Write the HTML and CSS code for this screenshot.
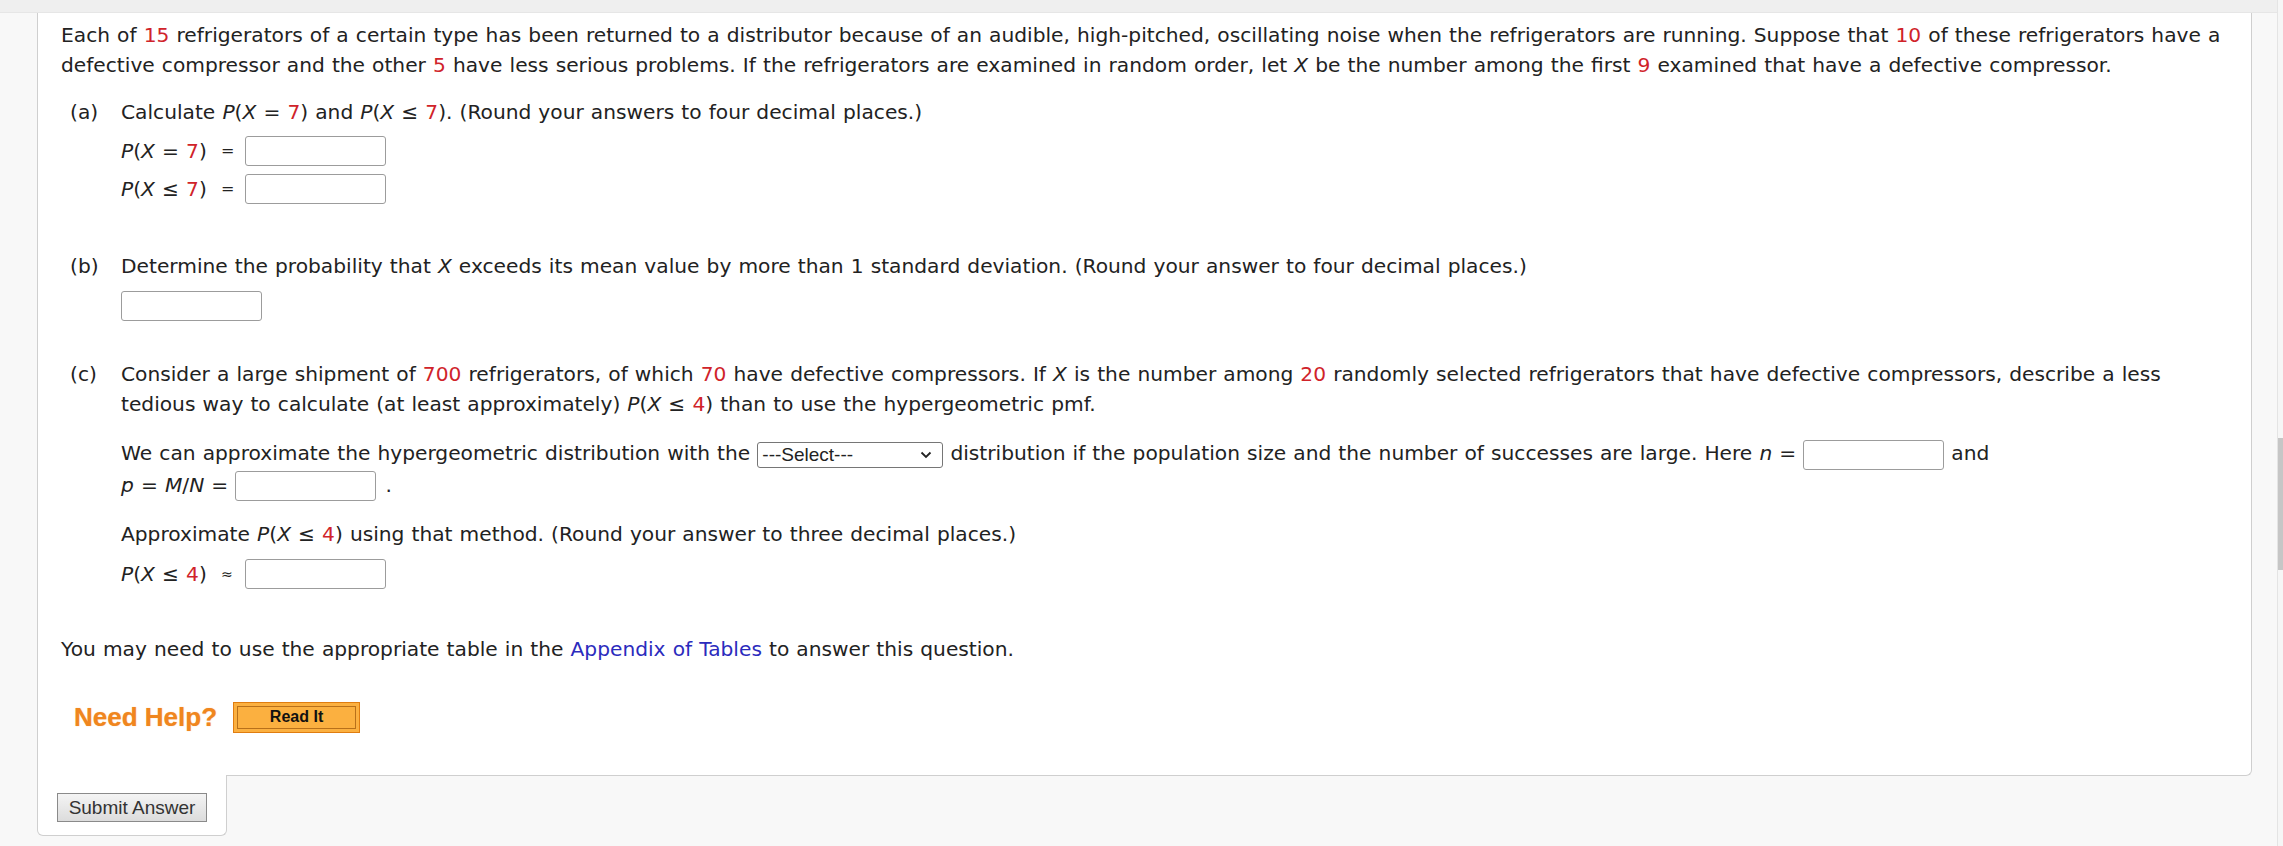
FILE: index.html
```html
<!DOCTYPE html>
<html lang="en">
<head>
<meta charset="utf-8">
<title>Question</title>
<link rel="stylesheet" href="styles.css">
</head>
<body>
<div class="page">
  <div class="main">
    <div class="topstrip"></div>
    <div class="wrap">
      <div class="panel">
        <p class="intro">Each of <span class="red">15</span> refrigerators of a certain type has been returned to a distributor because of an audible, high-pitched, oscillating noise when the refrigerators are running. Suppose that <span class="red">10</span> of these refrigerators have a defective compressor and the other <span class="red">5</span> have less serious problems. If the refrigerators are examined in random order, let <i>X</i> be the number among the first <span class="red">9</span> examined that have a defective compressor.</p>

        <div class="part part-a">
          <div class="label">(a)</div>
          <div class="body">
            <div class="qline">Calculate <i>P</i>(<i>X</i> = <span class="red">7</span>) and <i>P</i>(<i>X</i> &le; <span class="red">7</span>). (Round your answers to four decimal places.)</div>
            <div class="ansrow first"><span class="expr"><i>P</i>(<i>X</i> = <span class="red">7</span>)</span><span class="eq">=</span><span class="box"></span></div>
            <div class="ansrow"><span class="expr"><i>P</i>(<i>X</i> &le; <span class="red">7</span>)</span><span class="eq">=</span><span class="box"></span></div>
          </div>
        </div>

        <div class="part part-b">
          <div class="label">(b)</div>
          <div class="body">
            <div class="qline">Determine the probability that <i>X</i> exceeds its mean value by more than 1 standard deviation. (Round your answer to four decimal places.)</div>
            <div class="boxline"><span class="box"></span></div>
          </div>
        </div>

        <div class="part part-c">
          <div class="label">(c)</div>
          <div class="body">
            <div class="qline">Consider a large shipment of <span class="red">700</span> refrigerators, of which <span class="red">70</span> have defective compressors. If <i>X</i> is the number among <span class="red">20</span> randomly selected refrigerators that have defective compressors, describe a less tedious way to calculate (at least approximately) <i>P</i>(<i>X</i> &le; <span class="red">4</span>) than to use the hypergeometric pmf.</div>
            <div class="approx">We can approximate the hypergeometric distribution with the <span class="select"><span class="seltext">---Select---</span><svg class="chev" width="12" height="8" viewBox="0 0 12 8"><path d="M1.5 1.5 L6 6 L10.5 1.5" fill="none" stroke="#222" stroke-width="1.8"/></svg></span> distribution if the population size and the number of successes are large. <span class="nw">Here <i>n</i> = <span class="box inl"></span></span> and <span class="nw"><i>p</i> = <i>M</i>/<i>N</i> = <span class="box inl"></span> <span class="dot">.</span></span></div>
            <div class="qline method">Approximate <i>P</i>(<i>X</i> &le; <span class="red">4</span>) using that method. (Round your answer to three decimal places.)</div>
            <div class="ansrow"><span class="expr"><i>P</i>(<i>X</i> &le; <span class="red">4</span>)</span><span class="eq approx-sign">&asymp;</span><span class="box"></span></div>
          </div>
        </div>

        <p class="note">You may need to use the appropriate table in the <span class="link">Appendix of Tables</span> to answer this question.</p>

        <div class="help">
          <span class="needhelp">Need Help?</span>
          <span class="readit"><span class="readit-inner">Read It</span></span>
        </div>
      </div>
      <div class="tab">
        <span class="submit">Submit Answer</span>
      </div>
    </div>
  </div>
  <div class="scrollbar"><div class="thumb"></div></div>
</div>
</body>
</html>
```
FILE: styles.css
```css
html, body {
  margin: 0;
  padding: 0;
}
body {
  background: #f8f8f8;
  font-family: "DejaVu Sans", Verdana, sans-serif;
  font-size: 20.2px;
  word-spacing: 0.67px;
  line-height: 30px;
  color: #222;
  width: 2283px;
  height: 846px;
  overflow: hidden;
}
.page {
  display: flex;
  height: 846px;
}
.main {
  flex: 1;
  display: flex;
  flex-direction: column;
}
.topstrip {
  height: 12px;
  background: #efefef;
  border-bottom: 1px solid #e6e6e6;
}
.wrap {
  padding-left: 37px;
  padding-right: 25px;
}
.panel {
  background: #fff;
  border: 1px solid #cfcfcf;
  border-top: none;
  border-radius: 0 0 6px 0;
  padding: 7px 18px 38px 23px;
}
.intro {
  margin: 0;
}
.red {
  color: #d0232a;
}
i {
  font-style: italic;
}
.part {
  display: flex;
}
.part .label {
  width: 51px;
  padding-left: 9px;
  flex: none;
}
.part .body {
  flex: 1;
}
.part-a {
  margin-top: 17px;
}
.part-b {
  margin-top: 43px;
}
.part-c {
  margin-top: 38px;
}
.ansrow {
  display: flex;
  align-items: center;
  height: 38px;
}
.ansrow.first {
  margin-top: 5px;
}
.method + .ansrow {
  margin-top: 6px;
}
.expr {
  width: 100px;
  flex: none;
  white-space: nowrap;
}
.eq {
  width: 24px;
  flex: none;
  font-size: 16px;
}
.approx-sign {
  font-size: 14px;
}
.box {
  display: inline-block;
  width: 141px;
  height: 30px;
  box-sizing: border-box;
  border: 1px solid #9c9c9c;
  border-radius: 3px;
  background: #fff;
}
.box.inl {
  vertical-align: middle;
}
.boxline {
  margin-top: 10px;
  height: 30px;
}
.boxline .box {
  display: block;
}
.approx {
  margin-top: 19px;
}
.nw {
  white-space: nowrap;
}
.dot {
  margin-left: 2px;
}
.select {
  display: inline-flex;
  align-items: center;
  justify-content: space-between;
  width: 186px;
  height: 26px;
  box-sizing: border-box;
  border: 1px solid #767676;
  border-radius: 3px;
  padding: 0 10px 0 4px;
  vertical-align: middle;
  font-family: "Liberation Sans", Arial, sans-serif;
  font-size: 19px;
  word-spacing: 0;
  line-height: 24px;
  color: #222;
  background: #fff;
}
.method {
  margin-top: 18px;
}
.note {
  margin: 41px 0 0 0;
}
.link {
  color: #2b2bbd;
}
.help {
  margin-top: 33px;
  height: 40px;
  display: flex;
  align-items: center;
  padding-left: 13px;
}
.needhelp {
  font-family: "Liberation Sans", Arial, sans-serif;
  font-weight: bold;
  font-size: 26px;
  word-spacing: 0;
  color: #f0861e;
  text-shadow: 0 0 1px rgba(240, 134, 30, 0.6);
}
.readit {
  margin-left: 16px;
  width: 127px;
  height: 31px;
  box-sizing: border-box;
  border: 1px solid #e07d10;
  background: #fbb040;
  padding: 3px;
  display: flex;
}
.readit-inner {
  flex: 1;
  border: 1px solid #b8701a;
  display: flex;
  align-items: center;
  justify-content: center;
  font-family: "Liberation Sans", Arial, sans-serif;
  font-weight: bold;
  font-size: 16px;
  word-spacing: 0;
  color: #111;
}
.tab {
  width: 190px;
  height: 61px;
  box-sizing: border-box;
  margin-top: -1px;
  background: #fff;
  border: 1px solid #cfcfcf;
  border-top: none;
  border-radius: 0 0 6px 6px;
  padding: 18px 0 0 19px;
}
.submit {
  display: flex;
  align-items: center;
  justify-content: center;
  width: 150px;
  height: 29px;
  box-sizing: border-box;
  border: 1px solid #8a8a8a;
  background: linear-gradient(#f4f4f4, #dcdcdc);
  font-family: "Liberation Sans", Arial, sans-serif;
  font-size: 19px;
  word-spacing: 0;
  color: #333;
}
.scrollbar {
  width: 5px;
  border-left: 1px solid #e4e4e4;
  background: #f6f6f6;
}
.thumb {
  margin-top: 438px;
  height: 132px;
  background: #c6c6c6;
}
```
